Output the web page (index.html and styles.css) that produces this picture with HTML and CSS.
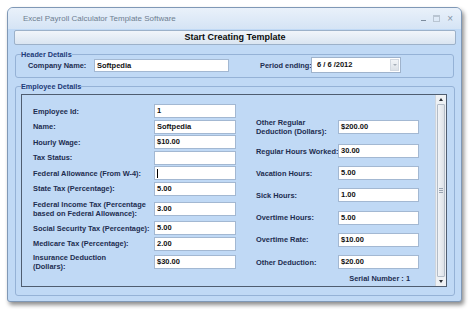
FILE: index.html
```html
<!DOCTYPE html>
<html>
<head>
<meta charset="utf-8">
<link rel="stylesheet" href="styles.css">
</head>
<body>
<div class="window">
  <div class="titlebar">
    <span class="title">Excel Payroll Calculator Template Software</span>
    <span class="controls">
      <span class="ctl min"></span>
      <span class="ctl max"></span>
      <span class="ctl close">×</span>
    </span>
  </div>
  <div class="content">
    <div class="bigbtn">Start Creating Template</div>
    <fieldset class="group header-group">
      <legend>Header Details</legend>
      <div class="header-row">
        <span class="lbl company-lbl">Company Name:</span>
        <span class="field company-field">Softpedia</span>
        <span class="lbl period-lbl">Period ending:</span>
        <span class="field date-field">6 / 6 /2012<span class="drop"><span class="drop-arrow"></span></span></span>
      </div>
    </fieldset>
    <fieldset class="group emp-group">
      <legend>Employee Details</legend>
      <div class="frame">
        <div class="cols">
          <div class="col left-col">
            <div class="row"><span class="lbl">Employee Id:</span><span class="field">1</span></div>
            <div class="row"><span class="lbl">Name:</span><span class="field">Softpedia</span></div>
            <div class="row"><span class="lbl">Hourly Wage:</span><span class="field">$10.00</span></div>
            <div class="row"><span class="lbl">Tax Status:</span><span class="field"></span></div>
            <div class="row"><span class="lbl">Federal Allowance (From W-4):</span><span class="field"><span class="caret"></span></span></div>
            <div class="row"><span class="lbl">State Tax (Percentage):</span><span class="field">5.00</span></div>
            <div class="row tall1"><span class="lbl two">Federal Income Tax (Percentage<br>based on Federal Allowance):</span><span class="field">3.00</span></div>
            <div class="row"><span class="lbl">Social Security Tax (Percentage):</span><span class="field">5.00</span></div>
            <div class="row"><span class="lbl">Medicare Tax (Percentage):</span><span class="field">2.00</span></div>
            <div class="row tall2"><span class="lbl two">Insurance Deduction<br>(Dollars):</span><span class="field">$30.00</span></div>
          </div>
          <div class="col right-col">
            <div class="rrow first"><span class="lbl two">Other Regular<br>Deduction (Dollars):</span><span class="field">$200.00</span></div>
            <div class="rrow"><span class="lbl">Regular Hours Worked:</span><span class="field">30.00</span></div>
            <div class="rrow"><span class="lbl">Vacation Hours:</span><span class="field">5.00</span></div>
            <div class="rrow"><span class="lbl">Sick Hours:</span><span class="field">1.00</span></div>
            <div class="rrow"><span class="lbl">Overtime Hours:</span><span class="field">5.00</span></div>
            <div class="rrow"><span class="lbl">Overtime Rate:</span><span class="field">$10.00</span></div>
            <div class="rrow"><span class="lbl">Other Deduction:</span><span class="field">$20.00</span></div>
            <div class="serial">Serial Number : 1</div>
          </div>
        </div>
        <div class="scrollbar">
          <div class="sb-btn"><span class="arrow-up"></span></div>
          <div class="sb-thumb"><span class="grip"></span></div>
          <div class="sb-btn"><span class="arrow-down"></span></div>
        </div>
      </div>
    </fieldset>
  </div>
</div>
</body>
</html>
```

FILE: styles.css
```css
html, body {
  margin: 0;
  padding: 0;
}
body {
  width: 474px;
  height: 315px;
  overflow: hidden;
  background: #ffffff;
  font-family: "Liberation Sans", Arial, sans-serif;
}
.window {
  margin: 7px 0 0 7px;
  width: 455px;
  height: 295px;
  box-sizing: border-box;
  border: 1px solid #7f98b6;
  border-radius: 6px 6px 3px 3px;
  background: #c0d9f5;
  box-shadow: 2px 3px 4px rgba(0, 0, 0, 0.45);
  display: flex;
  flex-direction: column;
  overflow: hidden;
}
.titlebar {
  height: 21px;
  flex: none;
  display: flex;
  align-items: center;
  justify-content: space-between;
  padding: 0 8px 0 15px;
  background: linear-gradient(#e9f1fa, #d5e4f5);
}
.title {
  font-size: 8px;
  color: #6e7e90;
}
.controls {
  display: flex;
  align-items: center;
  gap: 7px;
}
.ctl {
  display: block;
  color: #8493a4;
}
.ctl.min {
  width: 5px;
  height: 1px;
  background: #7d8c9d;
  margin-top: 4px;
}
.ctl.max {
  width: 5px;
  height: 4px;
  border: 1px solid #b9c5d2;
  border-top-width: 2px;
}
.ctl.close {
  font-size: 10px;
  line-height: 8px;
}
.content {
  flex: 1;
  padding: 1px 6px 0 6px;
  display: flex;
  flex-direction: column;
}
.bigbtn {
  height: 15px;
  box-sizing: border-box;
  margin-right: -1px;
  border: 1px solid #9cb1c9;
  border-radius: 2px;
  background: linear-gradient(#f1f5fa, #dae5f1);
  font-weight: bold;
  font-size: 9px;
  line-height: 13px;
  text-align: center;
  color: #0c0c0c;
}
.group {
  margin: 0 0 0 1px;
  padding: 0 7px 0 5px;
  border: 1px solid #95b2d6;
  border-radius: 3px;
  min-width: 0;
}
.group legend {
  padding: 0;
  font-weight: bold;
  font-size: 7.3px;
  line-height: 9px;
  color: #1d3a78;
}
.header-group {
  margin-top: 4.5px;
  margin-right: 1px;
  padding-bottom: 4px;
}
.header-row {
  display: flex;
  align-items: center;
  height: 16px;
  margin-top: -1.5px;
}
.lbl {
  font-weight: bold;
  font-size: 7.4px;
  line-height: 9px;
  color: #1d2d50;
  white-space: nowrap;
}
.company-lbl {
  margin-left: 7px;
  width: 66px;
  flex: none;
}
.field {
  display: block;
  box-sizing: border-box;
  height: 14px;
  background: #ffffff;
  border: 1px solid #a3b8d2;
  padding-left: 2px;
  font-weight: bold;
  font-size: 7.5px;
  line-height: 12px;
  color: #111111;
  white-space: nowrap;
  position: relative;
}
.company-field {
  width: 135px;
  height: 13px;
  line-height: 11px;
  flex: none;
}
.period-lbl {
  margin-left: 31px;
  width: 51px;
  flex: none;
}
.date-field {
  width: 90px;
  height: 16px;
  line-height: 14px;
  padding-left: 5px;
  border-color: #9fb3cc;
  flex: none;
}
.drop {
  position: absolute;
  right: 1px;
  top: 1px;
  width: 9px;
  height: 12px;
  background: linear-gradient(#f2f4f7, #dde2e8);
  border: 1px solid #d3d9e1;
  box-sizing: border-box;
  display: flex;
  align-items: center;
  justify-content: center;
}
.drop-arrow {
  width: 0;
  height: 0;
  border-left: 2px solid transparent;
  border-right: 2px solid transparent;
  border-top: 2px solid #a7afb9;
}
.emp-group {
  margin-top: 3.5px;
  padding-top: 3.5px;
  padding-bottom: 8px;
  flex: 1;
  display: flex;
  flex-direction: column;
  margin-bottom: 5px;
}
.frame {
  flex: 1;
  display: flex;
  border: 1px solid #4f5d70;
  background: #c0d9f5;
}
.cols {
  flex: 1;
  display: flex;
}
.col {
  display: flex;
  flex-direction: column;
}
.left-col {
  padding: 8.5px 0 0 11px;
}
.row {
  display: grid;
  grid-template-columns: 121px 82px;
  align-items: center;
  height: 15.5px;
}
.row.tall1 {
  height: 24px;
}
.row.tall2 {
  height: 21.5px;
}
.right-col {
  padding: 21px 0 0 20px;
}
.rrow {
  display: grid;
  grid-template-columns: 82px 81px;
  align-items: center;
  height: 22.2px;
}
.rrow.first {
  height: 22px;
  margin-bottom: 2px;
}
.caret {
  position: absolute;
  left: 2px;
  top: 2px;
  width: 1px;
  height: 9px;
  background: #000;
}
.serial {
  width: 154px;
  text-align: right;
  font-weight: bold;
  font-size: 7.4px;
  line-height: 12px;
  color: #1d2d50;
}
.scrollbar {
  width: 10px;
  flex: none;
  display: flex;
  flex-direction: column;
  background: #eceff3;
  border-left: 1px solid #cfd6de;
}
.sb-btn {
  height: 9px;
  flex: none;
  display: flex;
  align-items: center;
  justify-content: center;
  background: #eef1f4;
}
.arrow-up {
  width: 0;
  height: 0;
  border-left: 2.5px solid transparent;
  border-right: 2.5px solid transparent;
  border-bottom: 3px solid #2b2f36;
}
.arrow-down {
  width: 0;
  height: 0;
  border-left: 2.5px solid transparent;
  border-right: 2.5px solid transparent;
  border-top: 3px solid #2b2f36;
}
.sb-thumb {
  flex: 1;
  margin: 0 1px;
  border: 1px solid #b4bdc8;
  border-radius: 1px;
  background: linear-gradient(90deg, #f2f4f7, #dde2e8);
  display: flex;
  align-items: center;
  justify-content: center;
}
.grip {
  width: 4px;
  height: 5px;
  background: repeating-linear-gradient(#9aa4b1 0 1px, transparent 1px 2px);
}
```
